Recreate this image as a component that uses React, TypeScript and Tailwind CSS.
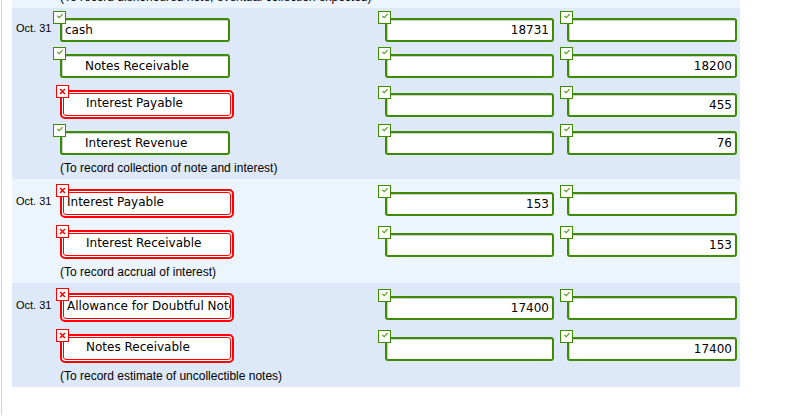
type Row = {
  date?: string
  account: string
  indent?: boolean
  wrong?: boolean
  debit?: string
  credit?: string
}

type Section = {
  tone: 'dark' | 'light'
  rows: Row[]
  note: string
}

const sections: Section[] = [
  {
    tone: 'dark',
    rows: [
      { date: 'Oct. 31', account: 'cash', debit: '18731' },
      { account: 'Notes Receivable', indent: true, credit: '18200' },
      { account: 'Interest Payable', indent: true, wrong: true, credit: '455' },
      { account: 'Interest Revenue', indent: true, credit: '76' },
    ],
    note: '(To record collection of note and interest)',
  },
  {
    tone: 'light',
    rows: [
      { date: 'Oct. 31', account: 'Interest Payable', wrong: true, debit: '153' },
      { account: 'Interest Receivable', indent: true, wrong: true, credit: '153' },
    ],
    note: '(To record accrual of interest)',
  },
  {
    tone: 'dark',
    rows: [
      { date: 'Oct. 31', account: 'Allowance for Doubtful Notes Receivable', wrong: true, debit: '17400' },
      { account: 'Notes Receivable', indent: true, wrong: true, credit: '17400' },
    ],
    note: '(To record estimate of uncollectible notes)',
  },
]

function Check() {
  return (
    <span className="absolute -left-[7px] -top-[7px] z-10 flex h-[13px] w-[13px] items-start justify-center border border-[#3d8b00] bg-white pt-[1px]">
      <svg viewBox="0 0 10 8" className="h-[6px] w-[8px]">
        <path d="M1.5 4 L4 6.2 L8.5 1.5" fill="none" stroke="#5c9e2a" strokeWidth="1.7" />
      </svg>
    </span>
  )
}

function Cross() {
  return (
    <span className="absolute -left-[4px] -top-[5px] z-10 flex h-[13px] w-[13px] items-center justify-center border border-[#ff0000] bg-white">
      <svg viewBox="0 0 10 10" className="h-[7px] w-[7px]">
        <path d="M1.5 1.5 L8.5 8.5 M8.5 1.5 L1.5 8.5" stroke="#ff0000" strokeWidth="2.2" />
      </svg>
    </span>
  )
}

function GreenBox({ text, width, align = 'left', indent }: { text?: string; width: string; align?: 'left' | 'right'; indent?: boolean }) {
  return (
    <div className={`relative h-[24px] ${width}`}>
      <Check />
      <div
        className={`h-full overflow-hidden whitespace-nowrap rounded-[3px] border-2 border-[#3d8b00] bg-white text-[12px] leading-[20px] text-black shadow-[inset_1px_1px_0_#cfcfcf] ${
          align === 'right' ? 'pr-[3px] text-right' : indent ? 'pl-[23px]' : 'pl-[3px]'
        }`}
      >
        {text}
      </div>
    </div>
  )
}

function RedBox({ text, indent }: { text: string; indent?: boolean }) {
  return (
    <div className="relative h-[29px] w-[174px]">
      <Cross />
      <div className="h-full rounded-[5px] border-2 border-[#ff0000] bg-white p-[1px]">
        <div
          className={`h-full overflow-hidden whitespace-nowrap rounded-[3px] border-[1.5px] border-[#ff0000] bg-white text-[12px] leading-[19px] text-black ${
            indent ? 'pl-[22px]' : 'pl-[3px]'
          }`}
        >
          {text}
        </div>
      </div>
    </div>
  )
}

function EntryRow({ row }: { row: Row }) {
  return (
    <div className="flex items-center">
      <div className="mb-[5px] w-[48px] shrink-0 pl-[4px] font-['Liberation_Sans',Arial,sans-serif] text-[11px] leading-[14px] text-black">
        {row.date}
      </div>
      <div className="w-[325px] shrink-0">
        {row.wrong ? (
          <RedBox text={row.account} indent={row.indent} />
        ) : (
          <GreenBox text={row.account} width="w-[170px]" indent={row.indent} />
        )}
      </div>
      <div className="flex gap-[13px]">
        <GreenBox text={row.debit} width="w-[169px]" align="right" />
        <GreenBox text={row.credit} width="w-[170px]" align="right" />
      </div>
    </div>
  )
}

export default function App() {
  return (
    <div className="h-[417px] w-[806px] bg-white font-['DejaVu_Sans',Verdana,sans-serif]">
      <div className="ml-[1px] h-[415px] border-l border-[#d4d4d4] pl-[10px]">
        <div className="w-[728px]">
          <div className="h-[8px] overflow-hidden bg-[#ecf4fd]">
            <div className="-mt-[11px] pl-[48px] font-['Liberation_Sans',Arial,sans-serif] text-[12px] leading-[17px] text-black">
              (To record dishonoured note, eventual collection expected)
            </div>
          </div>
          {sections.map((s, i) => (
            <div key={i} className={`pt-[10px] ${s.tone === 'dark' ? 'bg-[#dde9f8]' : 'bg-[#ecf4fd]'}`}>
              <div className="flex flex-col gap-[12px]">
                {s.rows.map((r, j) => (
                  <EntryRow key={j} row={r} />
                ))}
              </div>
              <div className="mt-[5px] pb-[2px] pl-[48px] font-['Liberation_Sans',Arial,sans-serif] text-[12px] leading-[17px] text-black">
                {s.note}
              </div>
            </div>
          ))}
        </div>
      </div>
    </div>
  )
}
